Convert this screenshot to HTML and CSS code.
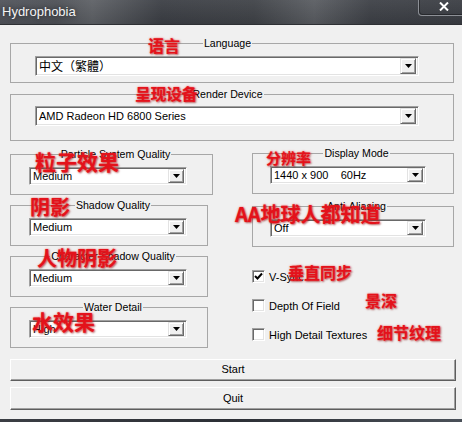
FILE: index.html
```html
<!DOCTYPE html>
<html>
<head>
<meta charset="utf-8">
<link rel="stylesheet" href="styles.css">
</head>
<body>
<div class="window">
  <div class="titlebar">
    <span class="title">Hydrophobia</span>
    <div class="close"><svg width="10" height="9" viewBox="0 0 10 9"><path d="M1 0.5 L9 8.5 M9 0.5 L1 8.5" stroke="#fff" stroke-width="2"/></svg></div>
  </div>
  <div class="client">
    <fieldset class="group g-lang">
      <legend>Language</legend>
      <div class="combo c-wide"><span class="val cjk">中文（繁體）</span><span class="drop"><svg width="7" height="4" viewBox="0 0 7 4"><polygon points="0,0 7,0 3.5,4" fill="#000"/></svg></span></div>
    </fieldset>
    <fieldset class="group g-render">
      <legend>Render Device</legend>
      <div class="combo c-wide"><span class="val">AMD Radeon HD 6800 Series</span><span class="drop"><svg width="7" height="4" viewBox="0 0 7 4"><polygon points="0,0 7,0 3.5,4" fill="#000"/></svg></span></div>
    </fieldset>
    <div class="cols">
      <div class="col col-left">
        <fieldset class="group g-left g-first">
          <legend>Particle System Quality</legend>
          <div class="combo c-left"><span class="val">Medium</span><span class="drop"><svg width="7" height="4" viewBox="0 0 7 4"><polygon points="0,0 7,0 3.5,4" fill="#000"/></svg></span></div>
        </fieldset>
        <fieldset class="group g-left g-narrow">
          <legend>Shadow Quality</legend>
          <div class="combo c-left"><span class="val">Medium</span><span class="drop"><svg width="7" height="4" viewBox="0 0 7 4"><polygon points="0,0 7,0 3.5,4" fill="#000"/></svg></span></div>
        </fieldset>
        <fieldset class="group g-left g-narrow">
          <legend>Character Shadow Quality</legend>
          <div class="combo c-left"><span class="val">Medium</span><span class="drop"><svg width="7" height="4" viewBox="0 0 7 4"><polygon points="0,0 7,0 3.5,4" fill="#000"/></svg></span></div>
        </fieldset>
        <fieldset class="group g-left g-narrow">
          <legend>Water Detail</legend>
          <div class="combo c-left"><span class="val">High</span><span class="drop"><svg width="7" height="4" viewBox="0 0 7 4"><polygon points="0,0 7,0 3.5,4" fill="#000"/></svg></span></div>
        </fieldset>
      </div>
      <div class="col col-right">
        <fieldset class="group g-right g-first">
          <legend>Display Mode</legend>
          <div class="combo c-right"><span class="val">1440 x 900&nbsp;&nbsp;&nbsp;&nbsp;60Hz</span><span class="drop"><svg width="7" height="4" viewBox="0 0 7 4"><polygon points="0,0 7,0 3.5,4" fill="#000"/></svg></span></div>
        </fieldset>
        <fieldset class="group g-right g-second">
          <legend>Anti-Aliasing</legend>
          <div class="combo c-right"><span class="val">Off</span><span class="drop"><svg width="7" height="4" viewBox="0 0 7 4"><polygon points="0,0 7,0 3.5,4" fill="#000"/></svg></span></div>
        </fieldset>
        <div class="checks">
          <label class="check"><span class="box"><svg width="9" height="9" viewBox="0 0 9 9"><path d="M1 4 L3.5 6.5 L8 1.5" stroke="#000" stroke-width="2" fill="none"/></svg></span><span>V-Sync</span></label>
          <label class="check"><span class="box"></span><span>Depth Of Field</span></label>
          <label class="check"><span class="box"></span><span>High Detail Textures</span></label>
        </div>
      </div>
    </div>
    <div class="btn btn-start">Start</div>
    <div class="btn btn-quit">Quit</div>
  </div>
  <div class="frame-bottom"></div>

  <span class="note n-lang">语言</span>
  <span class="note n-render">呈现设备</span>
  <span class="note n-particle">粒子效果</span>
  <span class="note n-shadow">阴影</span>
  <span class="note n-char">人物阴影</span>
  <span class="note n-water">水效果</span>
  <span class="note n-res">分辨率</span>
  <span class="note n-aa">AA地球人都知道</span>
  <span class="note n-vsync">垂直同步</span>
  <span class="note n-dof">景深</span>
  <span class="note n-tex">细节纹理</span>
</div>
</body>
</html>
```

FILE: styles.css
```css
* { box-sizing: border-box; }
html, body { margin: 0; padding: 0; background: #f0f0f0; }

.window {
  position: relative;
  width: 462px;
  height: 422px;
  overflow: hidden;
  background: #f0f0f0;
  display: flex;
  flex-direction: column;
  font-family: "Liberation Sans", Arial, "Noto Sans CJK TC", sans-serif;
  font-size: 11px;
  color: #000;
}

/* ---------- title bar ---------- */
.titlebar {
  flex: none;
  height: 25px;
  display: flex;
  align-items: flex-start;
  background:
    linear-gradient(to bottom, rgba(255,255,255,0.06), rgba(0,0,0,0.08)),
    linear-gradient(to right, #50535a 0%, #4c4f55 12%, #5d6065 20%, #3b3e44 35%, #3f4247 55%, #595c61 68%, #3d4046 80%, #3a3d43 100%);
  border-bottom: 1px solid #2e3034;
}
.title {
  color: #f4f4f4;
  font-size: 13px;
  line-height: 13px;
  padding: 5px 0 0 2px;
  text-shadow: 0 0 4px rgba(0,0,0,0.6);
}
.close {
  margin-left: auto;
  width: 46px;
  height: 16px;
  margin-right: -2px;
  border: 1px solid #8d9096;
  border-top: none;
  border-bottom-left-radius: 4px;
  box-shadow: inset 1px -1px 0 rgba(0,0,0,0.35);
  display: flex;
  align-items: center;
  justify-content: center;
  padding: 0 0 2px 6px;
}

/* ---------- client ---------- */
.client {
  flex: 1;
  padding: 0 8px 0 10px;
}

.group {
  margin: 0;
  min-width: 0;
  border: 1px solid #a7a7a7;
}
.group legend {
  margin: 0 auto;
  padding: 0 1px;
  font-size: 10.6px;
  line-height: 13px;
}

.g-lang { margin-top: 12px; padding: 6px 33px 6px 24px; }
.g-render { margin-top: 5px; padding: 5px 33px 14px 24px; }

.cols {
  display: flex;
  align-items: flex-start;
}
.col-left { width: 203px; flex: none; }
.col-right { width: 202px; flex: none; margin-left: auto; }

.g-left { padding: 6px 10px 9px 18px; margin-top: 4px; }
.g-left.g-first { margin-top: 7px; }
.g-narrow { width: 198px; }
.g-right { padding: 6px 10px 9px 17px; }
.g-right.g-first { margin-top: 6px; }
.g-right.g-second { margin-top: 6px; }

/* ---------- combo ---------- */
.combo {
  display: flex;
  align-items: center;
  height: 18px;
  background: #fff;
  border: 1px solid;
  border-color: #a0a0a0 #fff #fff #a0a0a0;
  box-shadow: inset 1px 1px 0 #696969, inset -1px -1px 0 #e3e3e3;
  padding: 0 2px 0 3px;
}
.c-wide { width: 384px; height: 20px; }
.c-left { width: 158px; }
.c-right { width: 156px; }
.combo .val {
  flex: 1;
  white-space: nowrap;
  font-size: 11px;
  line-height: 13px;
}
.combo .val.cjk {
  font-family: "Noto Sans CJK TC", "Noto Sans CJK SC", sans-serif;
  font-size: 12px;
  line-height: 16px;
}
.drop {
  flex: none;
  width: 16px;
  height: 14px;
  background: #f0f0f0;
  border: 1px solid;
  border-color: #e3e3e3 #696969 #696969 #e3e3e3;
  box-shadow: inset 1px 1px 0 #fff, inset -1px -1px 0 #a0a0a0;
  display: flex;
  align-items: center;
  justify-content: center;
}
.c-wide .drop { height: 16px; }
.drop svg { display: block; }

/* ---------- checkboxes ---------- */
.checks {
  display: flex;
  flex-direction: column;
  gap: 16px;
  margin-top: 23px;
}
.check {
  display: flex;
  align-items: center;
  gap: 4px;
  height: 13px;
  font-size: 11px;
}
.box {
  width: 13px;
  height: 13px;
  flex: none;
  background: #fff;
  border: 1px solid;
  border-color: #a0a0a0 #fff #fff #a0a0a0;
  box-shadow: inset 1px 1px 0 #696969, inset -1px -1px 0 #e3e3e3;
  display: flex;
  align-items: center;
  justify-content: center;
}
.box svg { display: block; }

/* ---------- buttons ---------- */
.btn {
  margin-right: -2px;
  background: #f0f0f0;
  border: 1px solid;
  border-color: #fff #5e5e5e #5e5e5e #fff;
  box-shadow: inset -1px -1px 0 #a0a0a0;
  text-align: center;
  font-size: 11px;
  line-height: 13px;
}
.btn-start { margin-top: 11px; height: 22px; padding-top: 3px; }
.btn-quit { margin-top: 6px; height: 23px; padding-top: 4px; }

.frame-bottom {
  flex: none;
  height: 3px;
  background: linear-gradient(to right, #3b3e44, #2c2f35 50%, #4a5058);
}

/* ---------- red annotations (overlay) ---------- */
.note {
  position: absolute;
  color: #e3121b;
  font-family: "Noto Sans CJK SC", sans-serif;
  font-weight: 700;
  line-height: 1;
  white-space: nowrap;
  text-shadow: 0 0 2px rgba(255, 40, 40, 0.7), 1px 1px 2px rgba(110, 0, 0, 0.55);
}
.n-lang { left: 148px; top: 37px; font-size: 16px; }
.n-render { left: 135px; top: 85px; font-size: 16px; letter-spacing: -0.5px; }
.n-particle { left: 35px; top: 151px; font-size: 21px; }
.n-shadow { left: 30px; top: 197px; font-size: 20px; }
.n-char { left: 37px; top: 248px; font-size: 20px; }
.n-water { left: 32px; top: 311px; font-size: 21px; }
.n-res { left: 266px; top: 150px; font-size: 15px; }
.n-aa { left: 235px; top: 204px; font-size: 20px; }
.n-vsync { left: 288px; top: 264px; font-size: 16px; }
.n-dof { left: 365px; top: 292px; font-size: 16px; }
.n-tex { left: 377px; top: 324px; font-size: 16px; }
```
